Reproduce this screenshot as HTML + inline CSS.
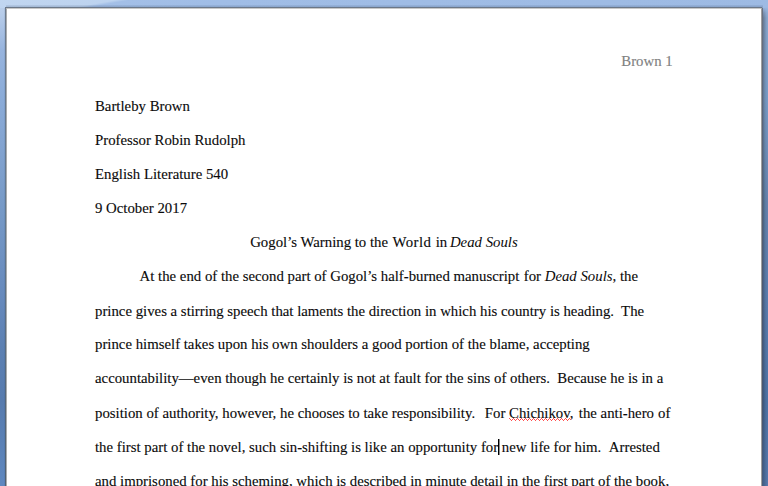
<!DOCTYPE html>
<html><head><meta charset="utf-8"><style>
html,body{margin:0;padding:0;width:768px;height:486px;overflow:hidden}
body{position:relative;background:linear-gradient(180deg,#bcd1ec 0px,#b8cdea 12px,#97b4de 50px,#8aabd8 100px,#82a3d0 150px,#789bc8 200px,#6689bc 300px,#5c80b2 350px,#577bae 400px,#5a80b5 440px,#5f88c0 486px)}
.top{position:absolute;left:0;top:0;width:768px;height:8px;background:linear-gradient(169.8deg,#c1d6f0 0px,#bdd3ef 20.5px,#a3bfe7 23px,#a0bde6 40px,#9dbae3 143px)}
.tsh{position:absolute;left:6px;top:5px;width:757px;height:2px;background:linear-gradient(180deg,rgba(40,60,90,.07),rgba(40,60,90,.2))}
.page{position:absolute;left:6px;top:8px;width:756px;height:478px;background:#fff;border-left:1px solid #a9abae;border-right:1px solid #a0a0a0;border-top:1px solid #c8c8c8;box-sizing:border-box}
.bt{position:absolute;left:5px;top:7px;width:758px;height:1px;background:#6b7787}
.bl{position:absolute;left:5px;top:8px;width:1px;height:478px;background:linear-gradient(180deg,#6c7a8c,#62788e 200px,#506070)}
.bl4{position:absolute;left:4px;top:8px;width:1px;height:478px;background:rgba(30,50,90,.08)}
.br{position:absolute;left:762px;top:8px;width:1px;height:478px;background:linear-gradient(180deg,#687080 10px,#5a6578 100px,#586070 202px,#4a5870 300px,#4a5670 402px,#4a5c7a)}
.rs{position:absolute;left:763px;top:8px;width:5px;height:478px;display:flex}
.rs i{display:block;width:1px;height:100%}
.rsf{position:absolute;left:763px;top:7px;width:5px;height:12px;background:linear-gradient(180deg,#9cb9e2 0px,rgba(156,185,226,.75) 2px,rgba(156,185,226,.3) 6px,rgba(156,185,226,0) 11px)}
.crn{position:absolute;left:762px;top:7px;width:1px;height:1px;background:#8aa0c0}
.l{position:absolute;white-space:pre;font-family:"Liberation Serif",serif;font-size:14.8px;line-height:normal;color:#0a0a0a;-webkit-text-stroke:0.12px currentColor}
.l i{-webkit-text-stroke:0}
.sq{position:absolute;left:509px;top:418px;fill:#ff5050}
.cur{position:absolute;left:498px;top:439px;width:1px;height:16px;background:#000;box-shadow:1px 0 0 rgba(0,0,0,.45)}
</style></head><body>
<div class="top"></div>
<div class="tsh"></div>
<div class="page"></div>
<div class="bt"></div><div class="bl"></div><div class="bl4"></div><div class="br"></div>
<div class="rs"><i style="background:linear-gradient(180deg,#6a7e98 10px,#62789a 92px,#4e6686 194px,#4a6088 292px,#3e5a80 394px,#42608c 478px)"></i><i style="background:linear-gradient(180deg,#7088a8 10px,#6c88a8 92px,#567494 194px,#4e6c94 292px,#44628c 394px,#486690 478px)"></i><i style="background:linear-gradient(180deg,#7a95b8 10px,#7090b8 92px,#5e7ca2 194px,#5474a0 292px,#4a6a98 394px,#4e6c9a 478px)"></i><i style="background:linear-gradient(180deg,#84a0c4 10px,#7496c0 92px,#647ea8 194px,#5878a8 292px,#4c70a0 394px,#5272a2 478px)"></i><i style="background:linear-gradient(180deg,#88a6cc 10px,#789ac4 92px,#6682ac 194px,#5a7cac 292px,#4e72a4 394px,#5676aa 478px)"></i></div>
<div class="rsf"></div><div class="crn"></div>
<div class="l" style="left:621.3px;top:53px;color:#808080">Brown 1</div>
<div class="l" style="left:95px;top:98px">Bartleby Brown</div>
<div class="l" style="left:95px;top:132px">Professor Robin Rudolph</div>
<div class="l" style="left:95px;top:166px">English Literature 540</div>
<div class="l" style="left:95px;top:200px">9 October 2017</div>
<div class="l" style="left:250.19px;top:234px">Gogol’s Warning to the </div>
<div class="l" style="left:392.47px;top:234px;letter-spacing:0.45px">World </div>
<div class="l" style="left:435.68px;top:234px">in </div>
<div class="l" style="left:449.92px;top:234px"><i>Dead Souls</i></div>
<div class="l" style="left:139.59px;top:268px">At the end of the second part of Gogol’s half-burned manuscript </div>
<div class="l" style="left:523.77px;top:268px">for <i>Dead Souls</i>, the</div>
<div class="l" style="left:95px;top:303px">prince gives a stirring speech that laments the direction in which his country is heading.&nbsp; The</div>
<div class="l" style="left:95px;top:336px">prince himself takes upon his own shoulders a good portion of the blame, accepting</div>
<div class="l" style="left:95px;top:370px">accountability—even though he certainly is not at fault for the sins of others.&nbsp; Because he is in a</div>
<div class="l" style="left:95px;top:405px">position of authority, however, he chooses to take responsibility.&nbsp; </div>
<div class="l" style="left:484.77px;top:405px">For Chichikov, </div>
<div class="l" style="left:578.81px;top:405px">the anti-hero </div>
<div class="l" style="left:658.1px;top:405px">of</div>
<div class="l" style="left:95px;top:439px">the first part of the novel, such sin-shifting is like an opportunity for new life for him.&nbsp; </div>
<div class="l" style="left:608.86px;top:439px">Arrested</div>
<div class="l" style="left:95px;top:473px">and imprisoned for his scheming, which is described in minute detail in the first part of the book,</div>
<svg class="sq" width="62" height="3" shape-rendering="crispEdges"><path d="M0 0h1v1h-1zM1 1h1v1h-1zM2 2h1v1h-1zM3 1h1v1h-1zM4 0h1v1h-1zM5 1h1v1h-1zM6 2h1v1h-1zM7 1h1v1h-1zM8 0h1v1h-1zM9 1h1v1h-1zM10 2h1v1h-1zM11 1h1v1h-1zM12 0h1v1h-1zM13 1h1v1h-1zM14 2h1v1h-1zM15 1h1v1h-1zM16 0h1v1h-1zM17 1h1v1h-1zM18 2h1v1h-1zM19 1h1v1h-1zM20 0h1v1h-1zM21 1h1v1h-1zM22 2h1v1h-1zM23 1h1v1h-1zM24 0h1v1h-1zM25 1h1v1h-1zM26 2h1v1h-1zM27 1h1v1h-1zM28 0h1v1h-1zM29 1h1v1h-1zM30 2h1v1h-1zM31 1h1v1h-1zM32 0h1v1h-1zM33 1h1v1h-1zM34 2h1v1h-1zM35 1h1v1h-1zM36 0h1v1h-1zM37 1h1v1h-1zM38 2h1v1h-1zM39 1h1v1h-1zM40 0h1v1h-1zM41 1h1v1h-1zM42 2h1v1h-1zM43 1h1v1h-1zM44 0h1v1h-1zM45 1h1v1h-1zM46 2h1v1h-1zM47 1h1v1h-1zM48 0h1v1h-1zM49 1h1v1h-1zM50 2h1v1h-1zM51 1h1v1h-1zM52 0h1v1h-1zM53 1h1v1h-1zM54 2h1v1h-1zM55 1h1v1h-1zM56 0h1v1h-1zM57 1h1v1h-1zM58 2h1v1h-1zM59 1h1v1h-1zM60 0h1v1h-1zM61 1h1v1h-1z"/></svg>
<div class="cur"></div>
</body></html>
